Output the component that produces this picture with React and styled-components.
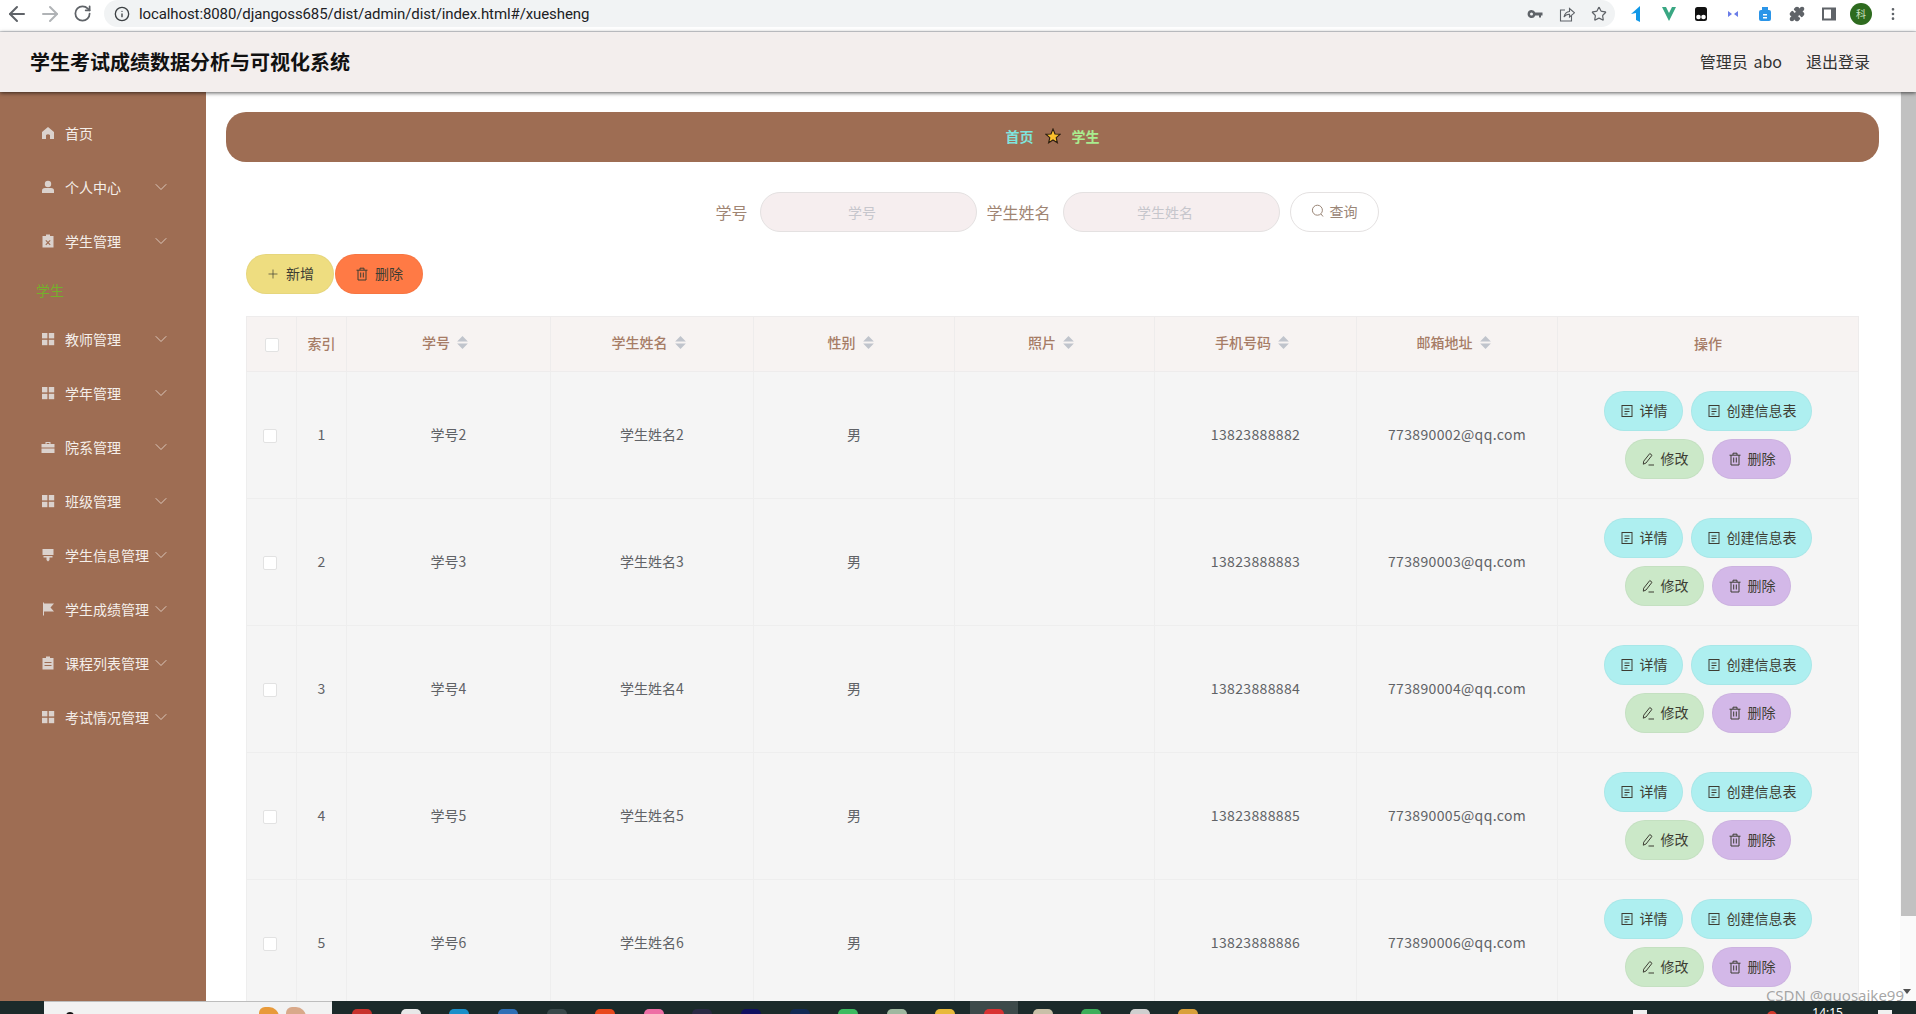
import React from "react";
import styled, { createGlobalStyle } from "styled-components";
import { ArrowLeft, ArrowRight, RotateCw, Info, Star, Puzzle, EllipsisVertical, ChevronDown, Plus } from "lucide-react";

const CJK = `"Noto Sans CJK SC", "Noto Sans", sans-serif`;

const GlobalStyle = createGlobalStyle`
  html, body { margin: 0; padding: 0; height: 100%; overflow: hidden; background: #fff; }
  * { box-sizing: border-box; }
  body { font-family: ${CJK}; }
`;

/* ---------- small drawings ---------- */

const paths = {
  home: <path d="M7 1 L13 6 V13 H9 V9 Q7 7.5 5 9 V13 H1 V6 Z" />,
  user: (
    <>
      <circle cx="7" cy="4" r="3.2" />
      <path d="M1 13 V10.5 Q1 8 4 8 H10 Q13 8 13 10.5 V13 Z" />
    </>
  ),
  claim: (
    <path
      fillRule="evenodd"
      d="M5 0.5 H9 V2 H12.5 V13.5 H1.5 V2 H5 Z M5.2 6 L4.4 6.8 L6.2 8.6 L4.4 10.4 L5.2 11.2 L7 9.4 L8.8 11.2 L9.6 10.4 L7.8 8.6 L9.6 6.8 L8.8 6 L7 7.8 Z"
    />
  ),
  grid: (
    <>
      <rect x="1" y="1" width="5.4" height="5.4" />
      <rect x="7.8" y="1" width="5.4" height="5.4" />
      <rect x="1" y="7.8" width="5.4" height="5.4" />
      <rect x="7.8" y="7.8" width="5.4" height="5.4" />
    </>
  ),
  case: <path fillRule="evenodd" d="M4.5 4 V2 H9.5 V4 H13.5 V7.5 H0.5 V4 Z M5.6 4 H8.4 V3 H5.6 Z M0.5 8.5 H13.5 V13 H0.5 Z" />,
  cup: <path d="M1.5 1 H12.5 V7 H1.5 Z M2.5 8 H11.5 V9.5 H8.5 V12 L7 13.5 L5.5 12 V9.5 H2.5 Z" />,
  flag: <path d="M2 0.5 H3 V1.5 H13 L9.5 5.5 L13 9.5 H3 V13.5 H2 Z" />,
  order: (
    <path
      fillRule="evenodd"
      d="M5 0.5 H9 V2 H12.5 V13.5 H1.5 V2 H5 Z M3.5 6 V7 H10.5 V6 Z M3.5 9 V10 H10.5 V9 Z"
    />
  ),
};

const SideIcon = ({ name }) => (
  <SideSvg viewBox="0 0 14 14" fill="currentColor">
    {paths[name]}
  </SideSvg>
);

const DocIcon = () => (
  <BtnSvg viewBox="0 0 14 14">
    <rect x="2" y="1.5" width="10" height="11" />
    <path d="M4.5 5 H9.5 M4.5 7.5 H9.5 M4.5 10 H7.5" />
  </BtnSvg>
);

const TrashIcon = () => (
  <BtnSvg viewBox="0 0 14 14">
    <path d="M1.5 3.2 H12.5 M5 3 V1.2 H9 V3 M3 3.2 V13 H11 V3.2 M5.7 5.5 V10.5 M8.3 5.5 V10.5" />
  </BtnSvg>
);

const EditIcon = () => (
  <BtnSvg viewBox="0 0 14 14">
    <path d="M8.8 1.5 L11 3.3 L5 11 L2.3 12.2 L2.7 9.2 Z M7.5 13 H13" />
  </BtnSvg>
);

const SearchIcon = () => (
  <BtnSvg viewBox="0 0 14 14">
    <circle cx="6.4" cy="6.2" r="5" />
    <path d="M10 10 L12 12.5" />
  </BtnSvg>
);

const KeyIcon = () => (
  <svg width="16" height="16" viewBox="0 0 16 16" fill="#5f6368">
    <path fillRule="evenodd" d="M4.5 4 A4 4 0 0 1 8.3 6.5 H15.5 V9.5 H14 V11.5 H12 V9.5 H8.3 A4 4 0 1 1 4.5 4 Z M4.5 6.5 A1.5 1.5 0 1 0 4.5 9.5 A1.5 1.5 0 0 0 4.5 6.5 Z" />
  </svg>
);

const ShareIcon = () => (
  <svg width="16" height="16" viewBox="0 0 16 16" fill="none" stroke="#5f6368" strokeWidth="1.1">
    <path d="M6 4 H1.5 V15 H12.5 V10 M5 11 Q6 6 10.5 5.5 V2.5 L15.5 6.8 L10.5 11 V8.2 Q7 8 5 11 Z" />
  </svg>
);

const SidePanelIcon = () => (
  <svg width="16" height="16" viewBox="0 0 16 16">
    <path fillRule="evenodd" fill="#5f6368" d="M1 1.5 H15 V14.5 H1 Z M3 3.5 V12.5 H10 V3.5 Z" />
  </svg>
);

const extensions = [
  <path key="a" fill="#1098e8" d="M11 0 V16 L7 14 V7 L2 8 Z" />,
  <path key="b" fill="#3aa783" d="M1 1 H15 L8 15 Z M5 1 L8 7 L11 1 Z" fillRule="evenodd" />,
  <g key="c">
    <rect x="2" y="1" width="12" height="14" rx="2.5" fill="#111" />
    <circle cx="5.5" cy="11" r="2.3" fill="#fff" />
    <circle cx="10.5" cy="11" r="2.3" fill="#fff" />
  </g>,
  <path key="d" fill="#6a7de8" d="M3 5 L7 8 L3 11 Z M13 5 L9 8 L13 11 Z" />,
  <g key="e">
    <rect x="2" y="4" width="12" height="11" rx="2" fill="#2b95e8" />
    <rect x="5" y="1" width="6" height="3" fill="#2b95e8" />
    <rect x="6" y="8" width="4" height="1.5" fill="#fff" />
    <rect x="6" y="11" width="4" height="1.5" fill="#fff" />
  </g>,
];

const Caret = () => (
  <CaretSvg viewBox="0 0 10 14" fill="#c0c4cc">
    <path d="M5 1 L10 6 H0 Z M5 13 L0 8 H10 Z" />
  </CaretSvg>
);

/* ---------- data ---------- */

const menu = [
  { icon: "home", label: "首页" },
  { icon: "user", label: "个人中心", arrow: true },
  { icon: "claim", label: "学生管理", arrow: true, child: "学生" },
  { icon: "grid", label: "教师管理", arrow: true },
  { icon: "grid", label: "学年管理", arrow: true },
  { icon: "case", label: "院系管理", arrow: true },
  { icon: "grid", label: "班级管理", arrow: true },
  { icon: "cup", label: "学生信息管理", arrow: true },
  { icon: "flag", label: "学生成绩管理", arrow: true },
  { icon: "order", label: "课程列表管理", arrow: true },
  { icon: "grid", label: "考试情况管理", arrow: true },
];

const columns = [
  { label: "学号", width: 204 },
  { label: "学生姓名", width: 203 },
  { label: "性别", width: 201 },
  { label: "照片", width: 200 },
  { label: "手机号码", width: 202 },
  { label: "邮箱地址", width: 201 },
];

const students = [2, 3, 4, 5, 6].map((n, i) => ({
  index: i + 1,
  no: `学号${n}`,
  name: `学生姓名${n}`,
  sex: "男",
  phone: `1382388888${n}`,
  mail: `77389000${n}@qq.com`,
}));

const dockIcons = [
  "#c8322d", "#e8e8e8", "#1b8fc9", "#2f6fb5", "#39484a", "#e8481c", "#ee6fa5", "#2a2a44", "#101060",
  "#122a55", "#3dbb60", "#9fb8a0", "#e8b93a", "#d93232", "#c9c0a8", "#3dae5a", "#cfcfcf", "#d9a03a",
];

/* ---------- page ---------- */

export default function App() {
  return (
    <Page>
      <GlobalStyle />
      <BrowserBar>
        <NavIcons>
          <NavButton><ArrowLeft size={24} color="#5f6368" strokeWidth={2} /></NavButton>
          <NavButton><ArrowRight size={24} color="#b0b3b6" strokeWidth={2} /></NavButton>
          <NavButton><RotateCw size={19} color="#5f6368" strokeWidth={2.2} /></NavButton>
        </NavIcons>
        <UrlPill>
          <Info size={16} color="#3c4043" />
          <UrlText>localhost:8080/djangoss685/dist/admin/dist/index.html#/xuesheng</UrlText>
          <UrlActions>
            <KeyIcon />
            <ShareIcon />
            <Star size={16} color="#5f6368" strokeWidth={1.8} />
          </UrlActions>
        </UrlPill>
        <ExtensionRow>
          {extensions.map((e, i) => (
            <ExtSlot key={i}>
              <svg width="16" height="16" viewBox="0 0 16 16">{e}</svg>
            </ExtSlot>
          ))}
          <ExtSlot><Puzzle size={16} color="#5f6368" fill="#5f6368" /></ExtSlot>
          <ExtSlot><SidePanelIcon /></ExtSlot>
          <ExtSlot><Avatar>科</Avatar></ExtSlot>
          <ExtSlot><EllipsisVertical size={16} color="#5f6368" /></ExtSlot>
        </ExtensionRow>
      </BrowserBar>

      <TopHeader>
        <Title>学生考试成绩数据分析与可视化系统</Title>
        <HeaderRight>
          <span>管理员 abo</span>
          <span>退出登录</span>
        </HeaderRight>
      </TopHeader>

      <Body>
        <Sidebar>
          {menu.map((m) => (
            <React.Fragment key={m.label}>
              <MenuItem>
                <MenuLabel>
                  <SideIcon name={m.icon} />
                  {m.label}
                </MenuLabel>
                {m.arrow && <ChevronDown size={20} color="#e6d8d0" strokeWidth={1} />}
              </MenuItem>
              {m.child && <SubItem>{m.child}</SubItem>}
            </React.Fragment>
          ))}
        </Sidebar>

        <Main>
          <Breadcrumb>
            <CrumbLink>首页</CrumbLink>
            <svg width="16" height="16" viewBox="0 0 16 16">
              <path
                d="M8 1 L10 6 L15 6.3 L11.2 9.6 L12.4 14.8 L8 12 L3.6 14.8 L4.8 9.6 L1 6.3 L6 6 Z"
                fill="#fbc02d"
                stroke="#2b1d10"
                strokeWidth="1.1"
              />
            </svg>
            <CrumbCurrent>学生</CrumbCurrent>
          </Breadcrumb>

          <SearchRow>
            <SearchLabel>学号</SearchLabel>
            <SearchInput placeholder="学号" />
            <SearchLabel>学生姓名</SearchLabel>
            <SearchInput placeholder="学生姓名" />
            <SearchButton><SearchIcon />查询</SearchButton>
          </SearchRow>

          <ActionRow>
            <PillButton $bg="#eedd80" $wide><Plus size={14} strokeWidth={1.2} />新增</PillButton>
            <PillButton $bg="#ff7a45" $wide><TrashIcon />删除</PillButton>
          </ActionRow>

          <Table>
            <colgroup>
              <col width="50" />
              <col width="50" />
              {columns.map((c) => <col key={c.label} width={c.width} />)}
              <col width="301" />
            </colgroup>
            <thead>
              <tr>
                <HeadCell><CheckBox /></HeadCell>
                <HeadCell>索引</HeadCell>
                {columns.map((c) => (
                  <HeadCell key={c.label}>
                    <SortLabel>{c.label}<Caret /></SortLabel>
                  </HeadCell>
                ))}
                <HeadCell>操作</HeadCell>
              </tr>
            </thead>
            <tbody>
              {students.map((s) => (
                <tr key={s.index}>
                  <CheckCell><CheckBox /></CheckCell>
                  <Cell>{s.index}</Cell>
                  <Cell>{s.no}</Cell>
                  <Cell>{s.name}</Cell>
                  <Cell>{s.sex}</Cell>
                  <Cell />
                  <NumberCell>{s.phone}</NumberCell>
                  <NumberCell>{s.mail}</NumberCell>
                  <OpCell>
                    <OpWrap>
                      <PillButton $bg="#aeeff0"><DocIcon />详情</PillButton>
                      <PillButton $bg="#aeeff0"><DocIcon />创建信息表</PillButton>
                      <PillButton $bg="#cbe8c8"><EditIcon />修改</PillButton>
                      <PillButton $bg="#d3b8e8"><TrashIcon />删除</PillButton>
                    </OpWrap>
                  </OpCell>
                </tr>
              ))}
            </tbody>
          </Table>
        </Main>

        <ScrollTrack>
          <ScrollThumb />
          <ScrollArrow />
        </ScrollTrack>
        <Watermark>CSDN @guosaike99</Watermark>
      </Body>

      <Taskbar>
        <StartArea><StartGlyph /></StartArea>
        <TaskSearch>
          <TaskGlyph />
          <PinnedPeek $bg="#e89a3a" />
          <PinnedPeek $bg="#d9a98a" />
        </TaskSearch>
        <Dock>
          {dockIcons.map((c, i) => (
            <DockSlot key={i} $active={i === 13}><DockIcon $bg={c} /></DockSlot>
          ))}
        </Dock>
        <Tray>
          <TrayFirstGlyph />
          <TrayDot />
          <Clock>14:15</Clock>
          <StartGlyph />
        </Tray>
      </Taskbar>
    </Page>
  );
}

/* ---------- styles ---------- */

const Page = styled.div`
  width: 1916px;
  height: 1014px;
  display: flex;
  flex-direction: column;
  overflow: hidden;
  background: #fff;
`;

const BrowserBar = styled.div`
  height: 32px;
  flex: none;
  display: flex;
  align-items: flex-start;
  background: #fff;
  border-bottom: 1px solid #dadce0;
`;

const NavIcons = styled.div`
  display: flex;
  width: 104px;
  padding-left: 1px;
`;

const NavButton = styled.div`
  width: 32.5px;
  height: 27px;
  display: flex;
  align-items: center;
  justify-content: center;
`;

const UrlPill = styled.div`
  width: 1511px;
  height: 27px;
  display: flex;
  align-items: center;
  padding: 0 8px 0 10px;
  background: #f1f3f4;
  border-radius: 14px;
`;

const UrlText = styled.span`
  flex: 1;
  margin-left: 9px;
  font: 15px Roboto, sans-serif;
  letter-spacing: -0.1px;
  color: #202124;
`;

const UrlActions = styled.div`
  display: flex;
  gap: 16px;
  align-items: center;
`;

const ExtensionRow = styled.div`
  display: flex;
  padding-left: 6px;
`;

const ExtSlot = styled.div`
  width: 32px;
  height: 27px;
  display: flex;
  align-items: center;
  justify-content: center;
`;

const Avatar = styled.div`
  width: 22px;
  height: 22px;
  border-radius: 50%;
  background: #2e6b1f;
  color: #cfe3c5;
  font-size: 10px;
  display: flex;
  align-items: center;
  justify-content: center;
`;

const TopHeader = styled.header`
  position: relative;
  z-index: 2;
  height: 60px;
  flex: none;
  display: flex;
  align-items: center;
  justify-content: space-between;
  padding: 0 46px 2px 30px;
  background: #f3eeed;
  box-shadow: 0 1px 4px rgba(0, 0, 0, 0.65);
`;

const Title = styled.div`
  font-size: 20px;
  font-weight: 700;
  color: #111;
`;

const HeaderRight = styled.div`
  display: flex;
  gap: 24px;
  font-size: 16px;
  word-spacing: 2px;
  color: #333;
`;

const Body = styled.div`
  position: relative;
  flex: 1;
  min-height: 0;
  display: flex;
`;

const Sidebar = styled.aside`
  width: 206px;
  flex: none;
  padding-top: 14px;
  background: #9e6d53;
`;

const MenuItem = styled.div`
  height: 54px;
  display: flex;
  align-items: center;
  justify-content: space-between;
  padding: 0 35px 0 41px;
  font-size: 14px;
  color: #f5efea;
`;

const MenuLabel = styled.div`
  display: flex;
  align-items: center;
  gap: 10px;
`;

const SideSvg = styled.svg`
  width: 14px;
  height: 14px;
  color: #dbd2cd;
`;

const SubItem = styled.div`
  height: 44px;
  line-height: 44px;
  padding-left: 36px;
  font-size: 14px;
  color: #74b02c;
`;

const Main = styled.main`
  flex: 1;
  min-width: 0;
  overflow: hidden;
  padding: 20px 21px 0 20px;
`;

const Breadcrumb = styled.div`
  height: 50px;
  display: flex;
  align-items: center;
  justify-content: center;
  gap: 11px;
  padding-bottom: 2px;
  border-radius: 20px;
  background: #9e6d53;
  font-size: 14px;
  font-weight: 700;
`;

const CrumbLink = styled.span`
  color: #7fe4dc;
`;

const CrumbCurrent = styled.span`
  color: #a9ec8f;
`;

const SearchRow = styled.div`
  margin-top: 30px;
  padding-right: 11px;
  display: flex;
  align-items: center;
  justify-content: center;
`;

const SearchLabel = styled.label`
  margin-right: 12px;
  font-size: 16px;
  color: #a08573;
`;

const SearchInput = styled.input`
  width: 217px;
  height: 40px;
  margin-right: 10px;
  padding: 0 12px 0 0;
  border: 1px solid #e4e1e1;
  border-radius: 20px;
  outline: none;
  background: #f6eeef;
  text-align: center;
  font: 14px ${CJK};

  &::placeholder {
    color: #c6c6cc;
  }
`;

const SearchButton = styled.button`
  width: 89px;
  height: 40px;
  display: flex;
  align-items: center;
  justify-content: center;
  gap: 5px;
  padding: 0 0 2px;
  border: 1px solid #e4e1e1;
  border-radius: 20px;
  background: #fff;
  color: #9a8677;
  font: 14px ${CJK};
`;

const ActionRow = styled.div`
  margin: 22px 0 22px 20px;
  display: flex;
  gap: 1px;
`;

const PillButton = styled.button`
  height: 40px;
  display: inline-flex;
  align-items: center;
  justify-content: center;
  gap: 6px;
  padding: 0 ${(p) => (p.$wide ? 19 : 14.5)}px 2px;
  border: 1px solid rgba(0, 0, 0, 0.03);
  border-radius: 20px;
  background: ${(p) => p.$bg};
  color: #3d3d33;
  font: 14px ${CJK};

  svg {
    margin-top: 2px;
  }
`;

const BtnSvg = styled.svg`
  width: 14px;
  height: 14px;
  flex: none;
  fill: none;
  stroke: currentColor;
  stroke-width: 1;
`;

const Table = styled.table`
  width: 1612px;
  margin-left: 20px;
  table-layout: fixed;
  border-collapse: collapse;
  font-size: 14px;
`;

const HeadCell = styled.th`
  height: 55px;
  padding: 0 0 2px;
  background: #f7f3f2;
  border: 1px solid #eeecec;
  color: #a67c66;
  font-weight: 500;
  text-align: center;
`;

const SortLabel = styled.span`
  display: inline-flex;
  align-items: center;
  gap: 7px;
  margin-right: 7px;
  transform: translateY(-1px);
`;

const CaretSvg = styled.svg`
  width: 11px;
  height: 15px;
`;

const Cell = styled.td`
  height: 127px;
  padding: 0 0 2px;
  background: #f5f5f5;
  border: 1px solid #eeeeee;
  color: #606266;
  text-align: center;
`;

const CheckCell = styled(Cell)`
  padding-right: 4px;
`;

const NumberCell = styled(Cell)`
  letter-spacing: 0.35px;
`;

const OpCell = styled(Cell)`
  padding: 0;
`;

const CheckBox = styled.span`
  display: inline-block;
  width: 14px;
  height: 14px;
  vertical-align: middle;
  background: #fff;
  border: 1px solid #e2e2e2;
  border-radius: 2px;
`;

const OpWrap = styled.div`
  width: 240px;
  margin: 0 auto;
  display: flex;
  flex-wrap: wrap;
  justify-content: center;
  gap: 8px;
`;

const ScrollTrack = styled.div`
  position: relative;
  width: 16px;
  flex: none;
  background: #fafafa;
`;

const ScrollThumb = styled.div`
  height: 824px;
  margin-left: 1px;
  background: #c1c1c1;
`;

const ScrollArrow = styled.div`
  position: absolute;
  left: 3px;
  bottom: 7px;
  border-left: 4px solid transparent;
  border-right: 4px solid transparent;
  border-top: 5px solid #505050;
`;

const Watermark = styled.div`
  position: absolute;
  right: 12px;
  bottom: -4px;
  font: 15px "Noto Sans", sans-serif;
  color: rgba(150, 150, 150, 0.85);
  pointer-events: none;
`;

const Taskbar = styled.div`
  position: relative;
  z-index: 1;
  height: 13px;
  flex: none;
  display: flex;
  overflow: hidden;
  background: #1b2a2a;
`;

const StartArea = styled.div`
  width: 44px;
  padding: 12px 0 0 16px;
`;

const StartGlyph = styled.div`
  width: 14px;
  height: 10px;
  margin-top: 3px;
  background: #f0f0f0;
`;

const TrayFirstGlyph = styled(StartGlyph)`
  margin-right: 85px;
`;

const TaskSearch = styled.div`
  width: 288px;
  display: flex;
  align-items: flex-start;
  padding: 10px 0 0 22px;
  background: #f2f2f2;
  border-top: 1px solid #bdbdbd;
`;

const TaskGlyph = styled.div`
  width: 8px;
  height: 8px;
  margin-right: 185px;
  background: #111;
  border-radius: 50%;
`;

const PinnedPeek = styled.div`
  width: 20px;
  height: 20px;
  margin: -5px 7px 0 0;
  border-radius: 6px 10px 0 0;
  background: ${(p) => p.$bg};
`;

const Dock = styled.div`
  display: flex;
  padding-left: 6px;
`;

const DockSlot = styled.div`
  width: 48.6px;
  height: 13px;
  padding-top: 8px;
  display: flex;
  justify-content: center;
  background: ${(p) => (p.$active ? "#3d4a4a" : "transparent")};
`;

const DockIcon = styled.div`
  width: 20px;
  height: 18px;
  border-radius: 5px;
  background: ${(p) => p.$bg};
`;

const Tray = styled.div`
  flex: 1;
  display: flex;
  justify-content: flex-end;
  gap: 35px;
  padding: 6px 24px 0 0;
`;

const TrayDot = styled.div`
  width: 10px;
  height: 10px;
  margin-top: 4px;
  border-radius: 50%;
  background: #d33a2c;
`;

const Clock = styled.div`
  margin: -3px 0 0 0;
  font: 12px "Noto Sans", sans-serif;
  color: #fff;
`;
